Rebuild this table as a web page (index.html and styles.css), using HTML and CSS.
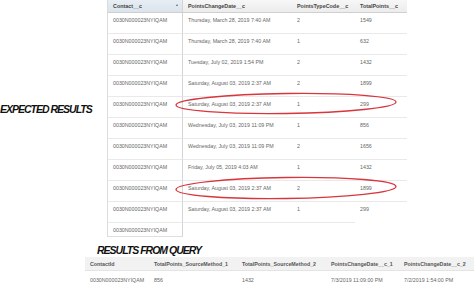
FILE: index.html
```html
<!DOCTYPE html>
<html>
<head>
<meta charset="utf-8">
<link rel="stylesheet" href="styles.css">
</head>
<body>
<div class="page">
  <section class="top">
    <div class="label-col"><div class="label">EXPECTED RESULTS</div></div>
    <div class="grid">
      <div class="row head">
        <div class="c c1 sorted">Contact__c<span class="arrow"></span></div>
        <div class="c c2">PointsChangeDate__c</div>
        <div class="c c3">PointsTypeCode__c</div>
        <div class="c c4">TotalPoints__c</div>
      </div>
      <div class="row"><div class="c c1">0030N000023NYIQAM</div><div class="c c2">Thursday, March 28, 2019 7:40 AM</div><div class="c c3">2</div><div class="c c4">1549</div></div>
      <div class="row"><div class="c c1">0030N000023NYIQAM</div><div class="c c2">Thursday, March 28, 2019 7:40 AM</div><div class="c c3">1</div><div class="c c4">632</div></div>
      <div class="row"><div class="c c1">0030N000023NYIQAM</div><div class="c c2">Tuesday, July 02, 2019 1:54 PM</div><div class="c c3">2</div><div class="c c4">1432</div></div>
      <div class="row"><div class="c c1">0030N000023NYIQAM</div><div class="c c2">Saturday, August 03, 2019 2:37 AM</div><div class="c c3">2</div><div class="c c4">1899</div></div>
      <div class="row"><div class="c c1">0030N000023NYIQAM</div><div class="c c2">Saturday, August 03, 2019 2:37 AM</div><div class="c c3">1</div><div class="c c4">299</div></div>
      <div class="row"><div class="c c1">0030N000023NYIQAM</div><div class="c c2">Wednesday, July 03, 2019 11:09 PM</div><div class="c c3">1</div><div class="c c4">856</div></div>
      <div class="row"><div class="c c1">0030N000023NYIQAM</div><div class="c c2">Wednesday, July 03, 2019 11:09 PM</div><div class="c c3">2</div><div class="c c4">1656</div></div>
      <div class="row"><div class="c c1">0030N000023NYIQAM</div><div class="c c2">Friday, July 05, 2019 4:03 AM</div><div class="c c3">1</div><div class="c c4">1432</div></div>
      <div class="row"><div class="c c1">0030N000023NYIQAM</div><div class="c c2">Saturday, August 03, 2019 2:37 AM</div><div class="c c3">2</div><div class="c c4">1899</div></div>
      <div class="row"><div class="c c1">0030N000023NYIQAM</div><div class="c c2">Saturday, August 03, 2019 2:37 AM</div><div class="c c3">1</div><div class="c c4 short">299</div></div>
      <div class="row last"><div class="c c1">0030N000023NYIQAM</div></div>
    </div>
  </section>
  <section class="bottom">
    <div class="title">RESULTS FROM QUERY</div>
    <div class="qtable">
      <div class="qrow qhead">
        <div class="q q1">ContactId</div>
        <div class="q q2">TotalPoints_SourceMethod_1</div>
        <div class="q q3">TotalPoints_SourceMethod_2</div>
        <div class="q q4">PointsChangeDate__c_1</div>
        <div class="q q5">PointsChangeDate__c_2</div>
      </div>
      <div class="qrow">
        <div class="q q1">0030N000023NYIQAM</div>
        <div class="q q2">856</div>
        <div class="q q3">1432</div>
        <div class="q q4">7/3/2019 11:09:00 PM</div>
        <div class="q q5">7/2/2019 1:54:00 PM</div>
      </div>
    </div>
  </section>
  <svg class="marks" width="474" height="287" viewBox="0 0 474 287">
    <ellipse cx="286" cy="103.5" rx="110" ry="10" transform="rotate(-0.8 286 103.5)"/>
    <ellipse cx="286" cy="188" rx="110" ry="10.5" transform="rotate(-0.8 286 188)"/>
  </svg>
</div>
</body>
</html>
```
FILE: styles.css
```css
html, body {
  margin: 0;
  padding: 0;
  background: #ffffff;
}
.page {
  position: relative;
  width: 474px;
  height: 287px;
  overflow: hidden;
  font-family: "Liberation Sans", Arial, sans-serif;
  color: #666;
}
.top {
  display: flex;
  height: 237px;
}
.label-col {
  width: 107px;
  padding-top: 103px;
  box-sizing: border-box;
}
.label {
  font-size: 10.5px;
  line-height: 12px;
  font-weight: bold;
  font-style: italic;
  color: #111;
  letter-spacing: -1px;
  white-space: nowrap;
}
.grid {
  display: flex;
  flex-direction: column;
}
.row {
  display: flex;
  height: 21px;
}
.c {
  box-sizing: border-box;
  font-size: 5.3px;
  line-height: 6px;
  padding: 4px 0 0 5px;
  white-space: nowrap;
  border-bottom: 1px solid #e9e9e9;
}
.c1 {
  width: 76px;
  border-left: 1px solid #dcdcdc;
  border-right: 1px solid #d4d4d4;
}
.c2 { width: 109px; }
.c3 { width: 63px; }
.c4 { width: 52px; }
.head {
  height: 13px;
}
.head .c {
  font-weight: bold;
  font-size: 5.4px;
  color: #444;
  padding-top: 3px;
  background: linear-gradient(#f7f7f7, #ececec);
  border-bottom: 1px solid #cfcfcf;
}
.head .sorted {
  display: flex;
  justify-content: space-between;
  padding-right: 4px;
  background: linear-gradient(#e7eef4, #dbe4ec);
}
.arrow {
  margin-top: 1px;
  width: 0;
  height: 0;
  border-left: 1.5px solid transparent;
  border-right: 1.5px solid transparent;
  border-bottom: 2.5px solid #666;
}
.short {
  border-bottom-color: transparent;
}
.last {
  height: 14px;
}
.last .c1 {
  border-bottom-color: #dedede;
}
.bottom {
  padding-top: 8px;
}
.title {
  margin-left: 97px;
  font-size: 10.5px;
  line-height: 11px;
  font-weight: bold;
  font-style: italic;
  color: #111;
  letter-spacing: -1px;
  white-space: nowrap;
}
.qtable {
  margin-left: 85px;
  margin-top: 1px;
}
.qrow {
  display: flex;
  height: 17px;
}
.qhead {
  height: 13px;
  background: #f2f2f2;
  border-bottom: 1px solid #e4e4e4;
}
.q {
  box-sizing: border-box;
  padding: 4px 0 0 5px;
  font-size: 5.3px;
  line-height: 6px;
  white-space: nowrap;
}
.qhead .q {
  padding-top: 4px;
  font-weight: bold;
  font-size: 5.3px;
  color: #555;
}
.qrow:not(.qhead) .q {
  padding-top: 6px;
}
.q1 { width: 64px; }
.q2 { width: 88px; }
.q3 { width: 89px; }
.q4 { width: 73px; }
.q5 { width: 75px; }
.marks {
  position: absolute;
  left: 0;
  top: 0;
  pointer-events: none;
}
.marks ellipse {
  fill: none;
  stroke: #d8353c;
  stroke-width: 1.3;
}
```
